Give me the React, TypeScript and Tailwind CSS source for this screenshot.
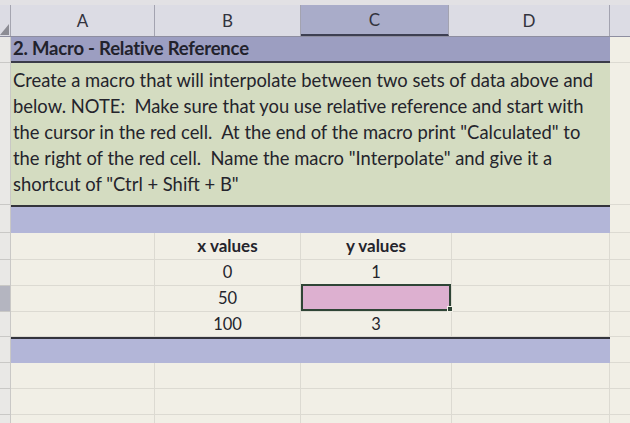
const cols = ['A', 'B', 'C', 'D']
const widths = ['w-[144px]', 'w-[146px]', 'w-[148px]', 'w-[161px]']

const lines = [
  'Create a macro that will interpolate between two sets of data above and',
  'below. NOTE:\u00a0 Make sure that you use relative reference and start with',
  'the cursor in the red cell.\u00a0 At the end of the macro print "Calculated" to',
  'the right of the red cell.\u00a0 Name the macro "Interpolate" and give it a',
  'shortcut of "Ctrl + Shift + B"',
]

function RowHead({ h, active }: { h: number; active?: boolean }) {
  return (
    <div
      className={`w-[11px] shrink-0 border-b border-r border-[#c9c8c6] ${active ? 'bg-[#b4b5c0]' : 'bg-[#e9e8e6]'}`}
      style={{ height: h }}
    />
  )
}

function GridRow({ h, active, children }: { h: number; active?: boolean; children: React.ReactNode }) {
  return (
    <div className="flex" style={{ height: h }}>
      <RowHead h={h} active={active} />
      {children}
    </div>
  )
}

function Cell({ w, children, className = '' }: { w: string; children?: React.ReactNode; className?: string }) {
  return (
    <div className={`${w} flex shrink-0 items-center justify-center border-b border-r border-[#dcdad2] ${className}`}>
      {children}
    </div>
  )
}

function DataRow({
  h,
  x,
  y,
  active,
  pink,
  bold,
}: {
  h: number
  x?: string
  y?: string
  active?: boolean
  pink?: boolean
  bold?: boolean
}) {
  return (
    <GridRow h={h} active={active}>
      <Cell w="w-[144px]" />
      <Cell w="w-[146px]" className={bold ? 'text-[17px] font-bold' : ''}>
        {x}
      </Cell>
      <Cell w="w-[151px]" className={pink ? 'relative border-0' : bold ? 'text-[17px] font-bold' : ''}>
        {pink ? (
          <div className="absolute inset-x-0 -top-[2px] bottom-0 border-2 border-[#2f4536] bg-[#ddb0d0]">
            <div className="absolute -bottom-[3px] -right-[4px] h-[6px] w-[6px] border border-[#f3f1e8] bg-[#2f4536]" />
          </div>
        ) : (
          y
        )}
      </Cell>
      <Cell w="w-[158px]" />
      <div className="flex-1 border-b border-[#dcdad2]" />
    </GridRow>
  )
}

function Band({ h }: { h: number }) {
  return (
    <GridRow h={h}>
      <div className="w-[599px] shrink-0 border-t-2 border-t-[#33343c] bg-[#b3b6d8]" />
      <div className="flex-1 border-b border-[#dcdad2]" />
    </GridRow>
  )
}

export default function App() {
  return (
    <div
      className="h-[423px] w-[630px] overflow-hidden bg-[#f1efe6] text-[#24242c]"
      style={{ fontFamily: 'Lato, "Open Sans", sans-serif' }}
    >
      <div className="h-[5px] bg-[#e2e1e4]" />
      {/* column headers */}
      <div className="flex h-[32px] border-b border-[#8e8ea0] bg-[#dcdce4] text-[17px] text-[#33333d]">
        <div className="relative w-[11px] shrink-0 border-r border-[#a5a5b0]">
          <svg className="absolute bottom-[1px] left-0" width="9" height="11" viewBox="0 0 9 11">
            <polygon points="9,0 9,11 0,11" fill="#8c8c94" />
          </svg>
        </div>
        {cols.map((c, i) => (
          <div
            key={c}
            className={`flex shrink-0 items-center justify-center border-r border-[#a3a3b0] ${widths[i]} ${
              c === 'C' ? 'border-b-2 border-b-[#3d3f52] bg-[#a9acc9]' : ''
            }`}
          >
            {c}
          </div>
        ))}
        <div className="flex-1" />
      </div>

      {/* title */}
      <GridRow h={26}>
        <div className="flex w-[599px] shrink-0 items-center border-b-2 border-[#3a3b48] bg-[#9c9ec1] pl-[2px] text-[18.5px] font-bold tracking-[-0.2px] text-[#22222c]">
          2. Macro - Relative Reference
        </div>
        <div className="flex-1 border-b border-[#dcdad2]" />
      </GridRow>

      {/* description */}
      <GridRow h={142}>
        <div className="w-[599px] shrink-0 whitespace-nowrap bg-[#d4dcc1] pl-[2px] pt-[4px] text-[18.4px] leading-[26px]">
          {lines.map((l) => (
            <div key={l}>{l}</div>
          ))}
        </div>
        <div className="flex-1 border-b border-[#dcdad2]" />
      </GridRow>

      <Band h={28} />

      <div className="text-[16.5px]">
        <DataRow h={27} x="x values" y="y values" bold />
        <DataRow h={26} x="0" y="1" />
        <DataRow h={26} x="50" pink active />
        <DataRow h={25} x="100" y="3" />
      </div>

      <Band h={26} />

      <DataRow h={26} />
      <DataRow h={26} />
      <DataRow h={26} />
    </div>
  )
}
